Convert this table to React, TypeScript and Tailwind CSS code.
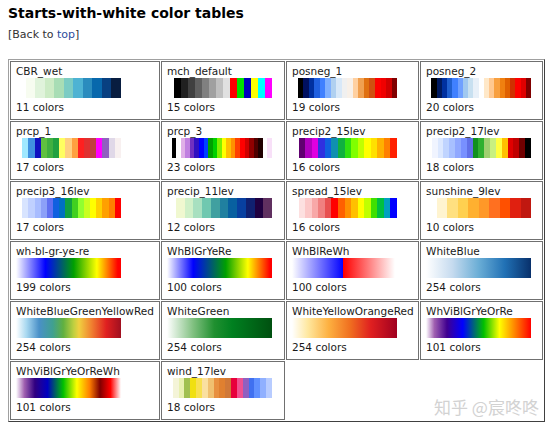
type ColorMap = {
  name: string;
  count: number;
  colors?: string[];
  gradient?: string;
};

const maps: ColorMap[] = [
  {
    name: 'CBR_wet',
    count: 11,
    colors: ['#ffffff', '#f7fcf0', '#e0f3db', '#ccebc5', '#a8ddb5', '#7bccc4', '#4eb3d3', '#2b8cbe', '#0868ac', '#084081', '#081d40'],
  },
  {
    name: 'mch_default',
    count: 15,
    colors: ['#ffffff', '#000000', '#202020', '#404040', '#606060', '#808080', '#a0a0a0', '#c0c0c0', '#e0e0e0', '#ff0000', '#00e000', '#0000c0', '#ffff00', '#00ffff', '#ff00ff'],
  },
  {
    name: 'posneg_1',
    count: 19,
    colors: ['#ffffff', '#000000', '#001060', '#0030a0', '#2060e0', '#4080ff', '#80b0ff', '#b0d0f0', '#d8e8f8', '#f0f0f0', '#f8f0e8', '#ffd0a0', '#f0a050', '#e07010', '#d05010', '#ff0000', '#f00000', '#d00000', '#800000'],
  },
  {
    name: 'posneg_2',
    count: 20,
    colors: ['#ffffff', '#000000', '#001a60', '#0030a0', '#2060d0', '#4080ff', '#70a0ff', '#a0c8f0', '#c8e0f0', '#e8f0f8', '#ffffff', '#ffe8c8', '#ffc890', '#f8a040', '#f08010', '#e06000', '#d03000', '#ff0000', '#e00000', '#800000'],
  },
  {
    name: 'prcp_1',
    count: 17,
    colors: ['#ffffff', '#a0e8ff', '#4090e0', '#1010c0', '#60c040', '#40b040', '#20a040', '#ffff60', '#ffd080', '#ffa040', '#ff2020', '#e03030', '#c04040', '#ff00ff', '#9060c0', '#e0d8e8', '#f8f0f0'],
  },
  {
    name: 'prcp_3',
    count: 23,
    colors: ['#ffffff', '#000000', '#ffffff', '#e0b0e8', '#c080e0', '#7030c0', '#3010c0', '#0000ff', '#0040ff', '#00a000', '#00d000', '#80f000', '#ffff00', '#ffc000', '#ff9000', '#ff4000', '#ff0000', '#d00000', '#900000', '#500000', '#200000', '#ffffff', '#f8e0f8'],
  },
  {
    name: 'precip2_15lev',
    count: 16,
    colors: ['#ffffff', '#600070', '#b000c0', '#e000e0', '#3030e0', '#1060e0', '#1090b0', '#10b040', '#30e010', '#80ff00', '#c0ff00', '#ffff00', '#ffe000', '#ffb000', '#ff8000', '#ff2000'],
  },
  {
    name: 'precip2_17lev',
    count: 18,
    colors: ['#ffffff', '#f0f4ff', '#dce8ff', '#c0d4ff', '#a8c0ff', '#90a8ff', '#7890ff', '#6070e8', '#109020', '#30b030', '#a0d070', '#c8f080', '#ffff40', '#ffc000', '#e00000', '#c00000', '#700000', '#000000'],
  },
  {
    name: 'precip3_16lev',
    count: 17,
    colors: ['#ffffff', '#d8e4ff', '#c0d0ff', '#a8bcff', '#8ca0f8', '#6070f0', '#1060e0', '#0070c0', '#10a040', '#40d020', '#90ff30', '#c8ff20', '#ffff00', '#ffd000', '#ffa000', '#ff8000', '#ff0000'],
  },
  {
    name: 'precip_11lev',
    count: 12,
    colors: ['#ffffff', '#f0f8d0', '#d0f0c8', '#a8e0c0', '#70c8b0', '#40a0a0', '#2080a0', '#0860a0', '#0840a0', '#102070', '#200040', '#603060'],
  },
  {
    name: 'spread_15lev',
    count: 16,
    colors: ['#ffffff', '#fde0e0', '#fcc8c8', '#f8a8a8', '#f08080', '#e85050', '#ff0000', '#ff6000', '#ff9000', '#ffc000', '#ffff00', '#c0ff00', '#40e000', '#00c040', '#00a0c0', '#0000ff'],
  },
  {
    name: 'sunshine_9lev',
    count: 10,
    colors: ['#ffffff', '#fff4d0', '#ffe080', '#ffd050', '#ffb030', '#ff9828', '#ff7020', '#ff5000', '#e02010', '#c01810'],
  },
  {
    name: 'wh-bl-gr-ye-re',
    count: 199,
    gradient: 'linear-gradient(to right, #ffffff 0%, #0000ff 28%, #00a000 55%, #ffff00 77%, #ff0000 97%)',
  },
  {
    name: 'WhBlGrYeRe',
    count: 100,
    gradient: 'linear-gradient(to right, #ffffff 0%, #0000ff 25%, #00a000 56%, #ffff00 77%, #ff0000 98%)',
  },
  {
    name: 'WhBlReWh',
    count: 100,
    gradient: 'linear-gradient(to right, #ffffff 0%, #0000ff 49%, #ff0000 49%, #ffffff 98%)',
  },
  {
    name: 'WhiteBlue',
    count: 254,
    gradient: 'linear-gradient(to right, #ffffff 0%, #c6dbef 25%, #6baed6 50%, #2171b5 75%, #08306b 100%)',
  },
  {
    name: 'WhiteBlueGreenYellowRed',
    count: 254,
    gradient: 'linear-gradient(to right, #ffffff 0%, #a8d8f0 10%, #4a90c8 22%, #40a090 35%, #60b040 45%, #c0d040 55%, #f0d040 60%, #f08030 72%, #e02020 86%, #a01020 100%)',
  },
  {
    name: 'WhiteGreen',
    count: 254,
    gradient: 'linear-gradient(to right, #ffffff 0%, #80c080 25%, #209030 45%, #008020 62%, #005010 100%)',
  },
  {
    name: 'WhiteYellowOrangeRed',
    count: 254,
    gradient: 'linear-gradient(to right, #ffffff 0%, #ffe8a0 15%, #fdb040 35%, #f07020 55%, #e02020 75%, #a00020 100%)',
  },
  {
    name: 'WhViBlGrYeOrRe',
    count: 101,
    gradient: 'linear-gradient(to right, #ffffff 0%, #a060b0 8%, #400090 20%, #0000ff 35%, #00c000 55%, #ffff00 70%, #ff8000 85%, #ff0000 100%)',
  },
  {
    name: 'WhViBlGrYeOrReWh',
    count: 101,
    gradient: 'linear-gradient(to right, #ffffff 0%, #a060b0 8%, #300080 18%, #0000c0 30%, #00c000 45%, #ffff00 58%, #ff8000 70%, #800000 80%, #ff0000 90%, #ffffff 100%)',
  },
  {
    name: 'wind_17lev',
    count: 18,
    colors: ['#ffffff', '#f4f4d8', '#e8f0b0', '#a0c050', '#f0e010', '#f8e050', '#fae0a0', '#f0c070', '#e89040', '#e08030', '#d07838', '#e8003c', '#f05090', '#9060c0', '#4070f0', '#6090ff', '#90b0ff', '#b8ccff'],
  },
];

function Bar({ map }: { map: ColorMap }) {
  if (map.gradient) {
    return <div className="h-5 w-[105px]" style={{ backgroundImage: map.gradient }} />;
  }
  return (
    <div className="flex h-5 w-[105px]">
      {map.colors!.map((c, i) => (
        <div key={i} className="flex-1" style={{ backgroundColor: c }} />
      ))}
    </div>
  );
}

export default function App() {
  return (
    <div className="relative h-[431px] w-[553px] overflow-hidden bg-white px-2 pt-[4px] font-['DejaVu_Sans',sans-serif] text-[#1a1a1a]">
      <h2 className="text-[14px] font-bold leading-[18px] text-black">Starts-with-white color tables</h2>
      <p className="mt-[6px] text-[11px] leading-[14px] text-[#333]">
        [Back to <span className="text-[#2b4c9b]">top</span>]
      </p>

      {/* Color table grid */}
      <div className="mt-[17px] inline-grid grid-cols-[150px_124px_133px_123px] gap-px border border-t-[#a0a0a0] border-l-[#a0a0a0] border-r-[#404040] border-b-[#404040] p-px">
        {maps.map((m) => (
          <div key={m.name} className="h-[59px] border border-[#707070] px-[5px] pt-[2px] text-[10.5px]">
            <div className="whitespace-nowrap leading-[14px]">{m.name}</div>
            <Bar map={m} />
            <div className="mt-[2px] leading-[14px]">{m.count} colors</div>
          </div>
        ))}
      </div>

      {/* watermark */}
      <div className="absolute left-[434px] top-[396px] font-['Noto_Sans_CJK_SC',sans-serif] text-[17px] leading-[22px] text-[#d2d2d2]">
        知乎 @宸咚咚
      </div>
    </div>
  );
}
